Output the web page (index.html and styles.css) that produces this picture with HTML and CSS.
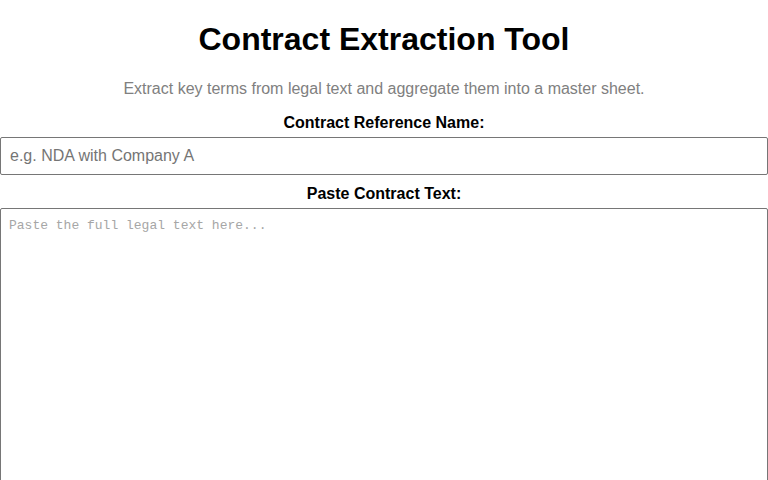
FILE: index.html
```html
<!DOCTYPE html>
<html>
<head>
<meta charset="utf-8">
<link rel="stylesheet" href="styles.css">
</head>
<body>
<div class="page">
  <h1 class="title">Contract Extraction Tool</h1>
  <p class="subtitle">Extract key terms from legal text and aggregate them into a master sheet.</p>
  <label class="field-label" for="ref">Contract Reference Name:</label>
  <input class="text-input" id="ref" type="text" placeholder="e.g. NDA with Company A">
  <label class="field-label" for="txt">Paste Contract Text:</label>
  <textarea class="text-area" id="txt" placeholder="Paste the full legal text here..."></textarea>
</div>
</body>
</html>
```
FILE: styles.css
```css
html, body {
  margin: 0;
  padding: 0;
  background: #fff;
}
body {
  font-family: "Liberation Sans", Arial, sans-serif;
  color: #000;
}
.page {
  display: flex;
  flex-direction: column;
  text-align: center;
}
.title {
  font-size: 32px;
  font-weight: bold;
  margin: 21px 0 21px;
  line-height: 37px;
}
.subtitle {
  margin: 1px 0 16px;
  font-size: 16px;
  line-height: 18px;
  color: #808080;
}
.field-label {
  display: block;
  font-weight: bold;
  font-size: 16px;
  line-height: 18px;
  margin: 0 0 5px;
}
.text-input {
  box-sizing: border-box;
  width: 100%;
  height: 38px;
  margin: 0 0 10px;
  padding: 0 9px;
  border: 1px solid #767676;
  border-radius: 2px;
  font-family: "Liberation Sans", Arial, sans-serif;
  font-size: 16px;
  color: #000;
  outline: none;
}
.text-input::placeholder {
  color: #757575;
}
.text-area {
  box-sizing: border-box;
  width: 100%;
  height: 300px;
  margin: 0;
  padding: 9px 8px 8px;
  border: 1px solid #767676;
  border-radius: 2px;
  font-family: "Liberation Mono", "Courier New", monospace;
  font-size: 13px;
  resize: vertical;
  outline: none;
}
.text-area::placeholder {
  color: #a6a6a6;
}
```
